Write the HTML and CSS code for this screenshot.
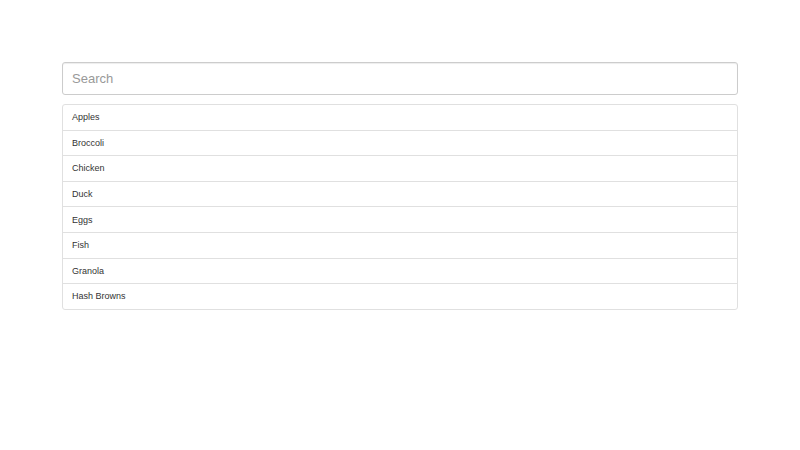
FILE: index.html
```html
<!DOCTYPE html>
<html>
<head>
<meta charset="utf-8">
<link rel="stylesheet" href="styles.css">
</head>
<body>
<div class="container">
  <input class="search" type="text" placeholder="Search">
  <ul class="list">
    <li class="item">Apples</li>
    <li class="item">Broccoli</li>
    <li class="item">Chicken</li>
    <li class="item">Duck</li>
    <li class="item">Eggs</li>
    <li class="item">Fish</li>
    <li class="item">Granola</li>
    <li class="item">Hash Browns</li>
  </ul>
</div>
</body>
</html>
```
FILE: styles.css
```css
html, body {
  margin: 0;
  padding: 0;
  background: #fff;
  font-family: "Liberation Sans", Arial, sans-serif;
  color: #333;
}
.container {
  margin: 0 62px;
  padding-top: 62px;
  display: flex;
  flex-direction: column;
}
.search {
  box-sizing: border-box;
  width: 100%;
  height: 33px;
  margin: 0;
  padding: 0 9px;
  border: 1px solid #ccc;
  border-radius: 3px;
  box-shadow: inset 0 1px 1px rgba(0,0,0,0.075);
  font-family: "Liberation Sans", Arial, sans-serif;
  font-size: 13px;
  color: #555;
  outline: none;
}
.search::placeholder {
  color: #999;
}
.list {
  list-style: none;
  margin: 9px 0 0 0;
  padding: 0;
}
.item {
  box-sizing: border-box;
  height: 26.6px;
  margin-bottom: -1px;
  padding: 0 9px;
  border: 1px solid #e0e0e0;
  display: flex;
  align-items: center;
  font-size: 9px;
  color: #333;
}
.item:first-child {
  border-top-left-radius: 3px;
  border-top-right-radius: 3px;
}
.item:last-child {
  border-bottom-left-radius: 3px;
  border-bottom-right-radius: 3px;
  margin-bottom: 0;
}
```
